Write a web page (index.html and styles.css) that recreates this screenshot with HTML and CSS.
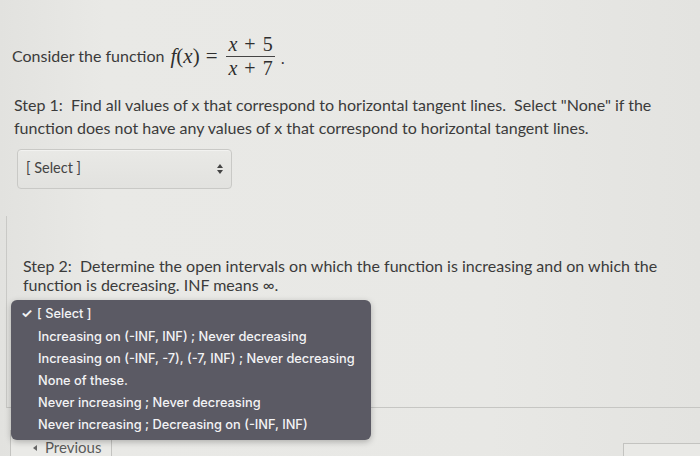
FILE: index.html
```html
<!DOCTYPE html>
<html>
<head>
<meta charset="utf-8">
<link rel="stylesheet" href="styles.css">
</head>
<body>
<div class="page">
  <div class="intro">
    <span class="intro-text">Consider the function</span>
    <span class="math">
      <span class="mi">f</span><span class="mo">(</span><span class="mi">x</span><span class="mo">)</span><span class="eq">=</span>
      <span class="frac">
        <span class="num"><span class="mi">x</span> + 5</span>
        <span class="den"><span class="mi">x</span> + 7</span>
      </span>
      <span class="dot">.</span>
    </span>
  </div>

  <p class="step1">Step 1:&nbsp; Find all values of x that correspond to horizontal tangent lines.&nbsp; Select "None" if the function does not have any values of x that correspond to horizontal tangent lines.</p>

  <div class="select">
    <span class="select-label">[ Select ]</span>
    <svg class="updown" width="8" height="12" viewBox="0 0 8 12"><path d="M4 1 L7 5 L1 5 Z M4 11 L7 7 L1 7 Z" fill="#444"/></svg>
  </div>

  <div class="qbox">
    <p class="step2">Step 2:&nbsp; Determine the open intervals on which the function is increasing and on which the function is decreasing. INF means &infin;.</p>
    <div class="menu">
      <div class="item checked"><span class="check">✓</span>[ Select ]</div>
      <div class="item">Increasing on (-INF, INF) ; Never decreasing</div>
      <div class="item">Increasing on (-INF, -7), (-7, INF) ; Never decreasing</div>
      <div class="item">None of these.</div>
      <div class="item">Never increasing ; Never decreasing</div>
      <div class="item">Never increasing ; Decreasing on (-INF, INF)</div>
    </div>
  </div>

  <div class="footer">
    <div class="prev"><span class="tri"></span>Previous</div>
    <div class="next"></div>
  </div>
</div>
</body>
</html>
```
FILE: styles.css
```css
html, body {
  margin: 0;
  padding: 0;
}
body {
  width: 700px;
  height: 456px;
  overflow: hidden;
  background: linear-gradient(90deg, #e2e2df 0%, #e9e9e6 15%, #e8e8e5 70%, #e3e3e0 100%);
  font-family: Lato, "Open Sans", sans-serif;
  color: #3b3b3b;
}
.page {
  position: relative;
  height: 456px;
}
.intro {
  display: flex;
  align-items: center;
  padding: 31px 0 0 12px;
  height: 50px;
}
.intro-text {
  font-size: 16px;
  margin-right: 6px;
  margin-top: -2px;
}
.math {
  display: inline-flex;
  align-items: center;
  font-family: "Liberation Serif", serif;
  color: #2e2e2e;
}
.mi {
  font-family: "Liberation Serif", serif;
  font-style: italic;
  font-size: 21px;
}
.mo {
  font-family: "Liberation Serif", serif;
  font-size: 21px;
}
.eq {
  font-family: "Liberation Serif", serif;
  font-size: 21px;
  margin: 0 8px 0 6px;
}
.frac {
  display: inline-flex;
  flex-direction: column;
  align-items: center;
  font-family: "Liberation Serif", serif;
  font-size: 20px;
  padding: 0 1px;
  word-spacing: 2px;
}
.frac .mi {
  font-size: 20px;
}
.num {
  border-bottom: 1px solid #444;
  line-height: 22px;
  padding: 0 2px 1px 2px;
}
.den {
  line-height: 22px;
}
.dot {
  font-family: "Liberation Serif", serif;
  font-size: 16px;
  margin-left: 5px;
  margin-top: 6px;
}
.step1 {
  margin: 12px 30px 0 14px;
  font-size: 16px;
  line-height: 23px;
}
.select {
  margin: 10px 0 0 17px;
  width: 215px;
  height: 40px;
  box-sizing: border-box;
  border: 1px solid #c9c9c6;
  border-radius: 4px;
  background: linear-gradient(180deg, #e9e9e6, #e2e2df);
  box-shadow: inset 0 1px 0 #f2f2f0;
  display: flex;
  align-items: center;
  justify-content: space-between;
  padding: 0 7px 0 8px;
}
.select-label {
  font-size: 14.5px;
  color: #444;
  margin-top: -4px;
}
.qbox {
  margin: 27px 0 0 6px;
  border-left: 1px solid #c9c9c6;
  border-bottom: 1px solid #c6c6c3;
  height: 191px;
  position: relative;
}
.step2 {
  margin: 0 20px 0 16px;
  padding-top: 40px;
  font-size: 16px;
  line-height: 19px;
}
.menu {
  position: absolute;
  left: 4px;
  top: 84px;
  width: 360px;
  box-sizing: border-box;
  background: #5b5a64;
  border-radius: 6px;
  padding: 1px 0 4px 0;
  box-shadow: 0 2px 6px rgba(0,0,0,0.25);
  font-family: Inter, "Noto Sans", sans-serif;
  font-size: 12.8px;
  font-weight: 500;
  color: #f3f3f5;
  z-index: 2;
}
.item {
  line-height: 22px;
  padding-left: 27px;
  white-space: nowrap;
}
.item.checked {
  padding-left: 10px;
  line-height: 24px;
}
.check {
  display: inline-block;
  width: 16px;
  font-size: 13px;
  font-weight: 700;
}
.footer {
  display: flex;
  justify-content: space-between;
  align-items: flex-start;
  margin-top: 22px;
}
.prev {
  margin-left: 10px;
  width: 102px;
  height: 30px;
  box-sizing: border-box;
  border: 1px solid #c3c3c0;
  border-bottom: none;
  background: #eaeae7;
  color: #5a5a5a;
  font-size: 15px;
  line-height: 15px;
  display: flex;
  align-items: flex-start;
  padding: 9px 0 0 22px;
}
.tri {
  display: inline-block;
  width: 0;
  height: 0;
  border-top: 3px solid transparent;
  border-bottom: 3px solid transparent;
  border-right: 4px solid #666;
  margin: 5px 8px 0 0;
}
.next {
  margin-top: 13px;
  width: 76px;
  height: 20px;
  border: 1px solid #c3c3c0;
  border-right: none;
  border-bottom: none;
  background: #e9e9e6;
}
```
